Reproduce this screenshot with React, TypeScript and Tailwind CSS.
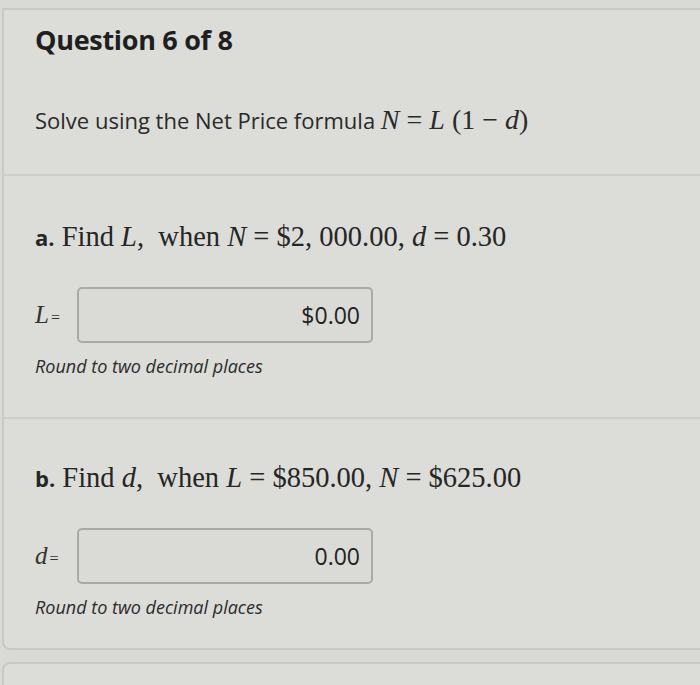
import React from "react";

const sans = "font-['Open_Sans','Liberation_Sans',sans-serif]";
const serif = "font-['Liberation_Serif','DejaVu_Serif',serif]";

const V: React.FC<{ children: React.ReactNode }> = ({ children }) => (
  <span className="italic">{children}</span>
);

interface PartProps {
  letter: string;
  prompt: React.ReactNode;
  variable: string;
  value: string;
}

const Part: React.FC<PartProps> = ({ letter, prompt, variable, value }) => (
  <div>
    <p className={`${serif} text-[28.5px] leading-[34px] text-[#262626]`}>
      <span className={`${sans} font-bold text-[22px]`}>{letter}.</span>{" "}
      {prompt}
    </p>
    <div className="mt-[33px] flex items-center gap-[4px]">
      <span className={`${serif} text-[25px] text-[#333] w-[38px]`}>
        <V>{variable}</V>
        <span className="text-[16px] align-middle ml-[2px]">=</span>
      </span>
      <div className="w-[296px] h-[56px] rounded-[5px] border-2 border-[#a9a9a6] bg-[#dadad7] flex items-center justify-end pr-[11px]">
        <span className={`${sans} text-[23px] text-[#222]`}>{value}</span>
      </div>
    </div>
    <p className={`${sans} italic text-[18px] text-[#2b2b2b] mt-[10px]`}>
      Round to two decimal places
    </p>
  </div>
);

export default function App() {
  return (
    <div className="w-[700px] h-[685px] overflow-hidden bg-[#d9d9d5] pt-[8px]">
      <div className="ml-[2px] rounded-bl-[8px] border-t-2 border-b-2 border-l-2 border-[#c9c9c5] bg-[#dcdcd8] h-[642px] pl-[31px]">
        <h1 className={`${sans} font-bold text-[27px] leading-[36px] text-[#1f1f1f] pt-[12px] tracking-[-0.3px]`}>
          Question 6 of 8
        </h1>
        <p className={`${sans} text-[22px] leading-[32px] text-[#2a2a2a] mt-[46px]`}>
          Solve using the Net Price formula{" "}
          <span className={`${serif} text-[28px]`}>
            <V>N</V>&nbsp;=&nbsp;<V>L</V>&nbsp;(1&nbsp;−&nbsp;<V>d</V>)
          </span>
        </p>
        <div className="mt-[38px] -ml-[31px] border-t-2 border-[#cdcdc9]" />
        <div className="pt-[44px]">
          <Part
            letter="a"
            variable="L"
            value="$0.00"
            prompt={
              <>
                Find <V>L</V>,&nbsp; when <V>N</V> = $2, 000.00, <V>d</V> = 0.30
              </>
            }
          />
        </div>
        <div className="mt-[37px] -ml-[31px] border-t-2 border-[#cdcdc9]" />
        <div className="pt-[42px]">
          <Part
            letter="b"
            variable="d"
            value="0.00"
            prompt={
              <>
                Find <V>d</V>,&nbsp; when <V>L</V> = $850.00, <V>N</V> = $625.00
              </>
            }
          />
        </div>
      </div>
      <div className="mt-[12px] ml-[2px] h-[40px] rounded-tl-[8px] border-t-2 border-l-2 border-[#c9c9c5] bg-[#dcdcd8]" />
    </div>
  );
}
